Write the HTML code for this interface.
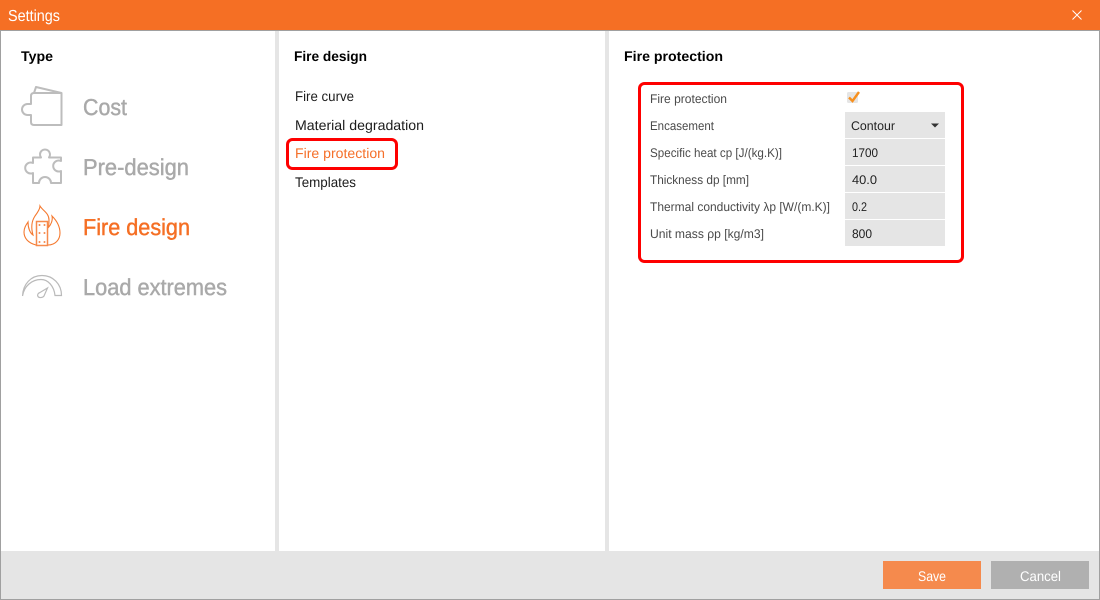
<!DOCTYPE html>
<html><head><meta charset="utf-8"><title>Settings</title>
<style>
html,body{margin:0;padding:0;width:1100px;height:600px;overflow:hidden;background:#fff}
svg{display:block}
text{font-family:"Liberation Sans",sans-serif;text-rendering:geometricPrecision}
.h{font-size:14px;font-weight:bold;fill:#000}
.n{font-size:14px;fill:#1c1c1c}
.l{font-size:12.5px;fill:#4a4a4a}
.v{font-size:12.5px;fill:#222}
.t{font-size:23px;fill:#a9a9a9;stroke:#a9a9a9;stroke-width:.45}
.i{fill:none;stroke:#bdbdbd;stroke-width:2;stroke-linejoin:round}
.g{fill:none;stroke:#bababa;stroke-width:1.2}
.f{fill:none;stroke:#f5792f;stroke-width:1.1}
</style></head><body>
<svg width="1100" height="600" viewBox="0 0 1100 600" xmlns="http://www.w3.org/2000/svg">
<rect width="1100" height="600" fill="#fff"/>
<rect x="275" y="30" width="4" height="522" fill="#e5e5e5"/>
<rect x="605" y="30" width="4" height="522" fill="#e5e5e5"/>
<rect x="0" y="551" width="1100" height="49" fill="#e5e5e5"/>
<rect x="0" y="30" width="1100" height="1" fill="#a0a0a0"/>
<rect x="0" y="30" width="1" height="570" fill="#a0a0a0"/>
<rect x="1099" y="30" width="1" height="570" fill="#a0a0a0"/>
<rect x="0" y="599" width="1100" height="1" fill="#a0a0a0"/>
<rect width="1100" height="30" fill="#f56f24"/>
<text x="8" y="21" font-size="16" fill="#fff" textLength="52" lengthAdjust="spacingAndGlyphs">Settings</text>
<path d="M1072.5 10.5l9 9M1081.5 10.5l-9 9" stroke="#fff" stroke-width="1" fill="none"/>

<text class="h" x="21" y="61" textLength="32" lengthAdjust="spacingAndGlyphs">Type</text>
<path class="i" d="M31 104V96Q31 93 34 93H61.500V125H34Q31 125 31 122V115H27.500a5.500 5.500 0 0 1 0-11ZM34 93L36 87L61.500 93"/>
<text class="t" x="83" y="115" textLength="44" lengthAdjust="spacingAndGlyphs">Cost</text>
<path class="i" d="M33 157.500H41a5 5 0 1 1 8 0H61V161a5.500 5.500 0 1 0 0 10V183H51a6 6 0 1 0-12 0H33V173a5.500 5.500 0 1 1 0-10Z"/>
<text class="t" x="83" y="175" textLength="106" lengthAdjust="spacingAndGlyphs">Pre-design</text>
<path class="f" d="M36 245C28 243 24 238 24 232C24 228 26 225 28 222C28 228 30 233 33 235C31 228 31 222 35 216C38 212 40 209 40 206C43 211 49 213 49 220C49 224 49 226 48 228C51 225 53 220 52 216C56 220 60 226 60 233C60 240 55 245 48 245Z"/>
<rect x="36.500" y="221.500" width="11" height="24" fill="#fff" stroke="#f68a4c" stroke-width="1.500"/>
<g fill="#f68a4c"><circle cx="39.500" cy="225" r="1"/><circle cx="44.500" cy="225" r="1"/><circle cx="39.500" cy="233" r="1"/><circle cx="44.500" cy="233" r="1"/><circle cx="39.500" cy="242" r="1"/><circle cx="44.500" cy="242" r="1"/></g>
<text x="83" y="235" font-size="23" fill="#f56f24" stroke="#f56f24" stroke-width=".45" textLength="107" lengthAdjust="spacingAndGlyphs">Fire design</text>
<path class="g" d="M22.500 296C23 284 31 275.500 42 275.500C53 275.500 61.500 284 61.500 295.500H55C54 286 48 279.500 41 279.500C32 279.500 24 286 22.500 296"/>
<path class="g" d="M47.500 288L44 296C42.500 298 39 298 38 296.500C37 295 38 293 40 292.500Z"/>
<text class="t" x="83" y="295" textLength="144" lengthAdjust="spacingAndGlyphs">Load extremes</text>

<text class="h" x="294" y="61" textLength="73" lengthAdjust="spacingAndGlyphs">Fire design</text>
<text class="n" x="295" y="101" textLength="59" lengthAdjust="spacingAndGlyphs">Fire curve</text>
<text class="n" x="295" y="130" textLength="129" lengthAdjust="spacingAndGlyphs">Material degradation</text>
<text class="n" x="295" y="158" style="fill:#f5702a" textLength="90" lengthAdjust="spacingAndGlyphs">Fire protection</text>
<text class="n" x="295" y="187" textLength="61" lengthAdjust="spacingAndGlyphs">Templates</text>
<rect x="287.500" y="139.500" width="109" height="29" rx="5" fill="none" stroke="#fe0000" stroke-width="3"/>

<text class="h" x="624" y="61" textLength="99" lengthAdjust="spacingAndGlyphs">Fire protection</text>
<rect x="639.500" y="83.500" width="323" height="178" rx="5" fill="none" stroke="#fe0000" stroke-width="3"/>
<text class="l" x="650" y="103" textLength="77" lengthAdjust="spacingAndGlyphs">Fire protection</text>
<text class="l" x="650" y="130" textLength="64" lengthAdjust="spacingAndGlyphs">Encasement</text>
<text class="l" x="650" y="157" textLength="132" lengthAdjust="spacingAndGlyphs">Specific heat cp [J/(kg.K)]</text>
<text class="l" x="650" y="184" textLength="99" lengthAdjust="spacingAndGlyphs">Thickness dp [mm]</text>
<text class="l" x="650" y="211" textLength="180" lengthAdjust="spacingAndGlyphs">Thermal conductivity λp [W/(m.K)]</text>
<text class="l" x="650" y="238" textLength="114" lengthAdjust="spacingAndGlyphs">Unit mass ρp [kg/m3]</text>

<rect x="847" y="92" width="11" height="11" rx="1.500" fill="#e5e5e5"/>
<path d="M849 97.500L852.500 101L859 92" fill="none" stroke="#f7901e" stroke-width="2.400"/>
<g fill="#e5e5e5">
<rect x="845" y="112" width="100" height="26"/>
<rect x="845" y="139" width="100" height="26"/>
<rect x="845" y="166" width="100" height="26"/>
<rect x="845" y="193" width="100" height="26"/>
<rect x="845" y="220" width="100" height="26"/>
</g>
<text class="v" x="851" y="130" textLength="44" lengthAdjust="spacingAndGlyphs">Contour</text>
<path d="M931 123.500H939L935 127.500Z" fill="#333"/>
<text class="v" x="852" y="157" textLength="26" lengthAdjust="spacingAndGlyphs">1700</text>
<text class="v" x="852" y="184" textLength="25" lengthAdjust="spacingAndGlyphs">40.0</text>
<text class="v" x="852" y="211" textLength="15" lengthAdjust="spacingAndGlyphs">0.2</text>
<text class="v" x="852" y="238" textLength="20" lengthAdjust="spacingAndGlyphs">800</text>

<rect x="883" y="561" width="98" height="28" fill="#f58a4d"/>
<rect x="991" y="561" width="98" height="28" fill="#b0b0b0"/>
<text x="918" y="581" font-size="14" fill="#fff" textLength="28" lengthAdjust="spacingAndGlyphs">Save</text>
<text x="1020" y="581" font-size="14" fill="#fff" textLength="41" lengthAdjust="spacingAndGlyphs">Cancel</text>
</svg>
</body></html>
